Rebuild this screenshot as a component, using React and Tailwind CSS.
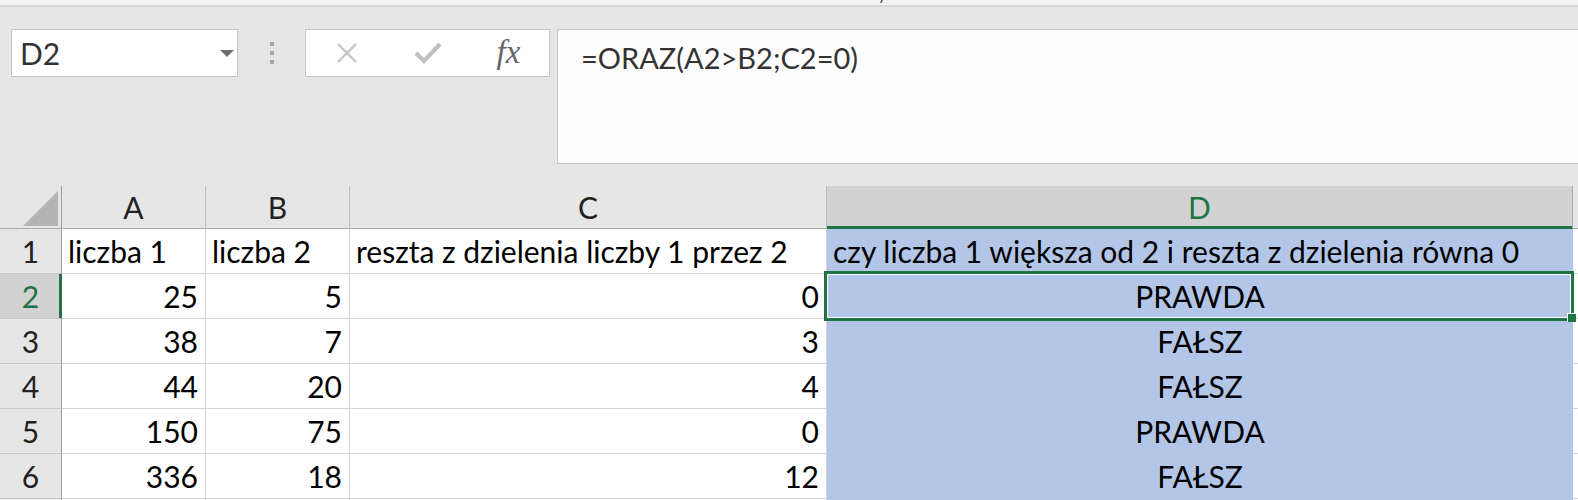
import React from "react";

const rows = [
  ["25", "5", "0", "PRAWDA"],
  ["38", "7", "3", "FAŁSZ"],
  ["44", "20", "4", "FAŁSZ"],
  ["150", "75", "0", "PRAWDA"],
  ["336", "18", "12", "FAŁSZ"],
];

function RowHead({ n, active }) {
  return (
    <div
      className={
        active
          ? "w-[62px] h-[45px] shrink-0 border-b border-r border-b-[#c8c8c8] border-r-[#217346] bg-[#d2d2d2] text-[#217346] text-center leading-[44px] shadow-[inset_-2px_0_0_#217346]"
          : "w-[62px] h-[45px] shrink-0 border-b border-r border-b-[#c8c8c8] border-r-[#9f9f9f] bg-[#e6e6e6] text-[#222] text-center leading-[44px]"
      }
    >
      {n}
    </div>
  );
}

export default function App() {
  return (
    <div className="w-[1578px] h-[500px] overflow-hidden bg-[#e6e6e6] font-['Lato',sans-serif] text-[30px]">
      {/* title strip */}
      <div className="h-[5px] bg-[#f3f3f3] overflow-hidden pl-[878px]">
        <span className="block -mt-[14px] text-[16px] leading-none text-[#444]">y</span>
      </div>
      <div className="h-[2px] bg-[#d5d5d5]" />

      {/* formula bar */}
      <div className="flex items-start h-[157px] pt-[22px]">
        <div className="ml-[11px] w-[227px] h-[48px] shrink-0 bg-white border border-[#c6c6c6] flex items-start justify-between">
          <span className="pl-[8px] pt-[5px] leading-[36px] text-[#333]">D2</span>
          <svg width="14" height="8" viewBox="0 0 14 8" className="mt-[20px] mr-[3px]">
            <polygon points="0,0 14,0 7,7" fill="#6d6d6d" />
          </svg>
        </div>
        <div className="w-[67px] shrink-0 flex flex-col items-center pt-[13px] gap-[5px]">
          <div className="w-[4px] h-[4px] bg-[#a8a8a8]" />
          <div className="w-[4px] h-[4px] bg-[#a8a8a8]" />
          <div className="w-[4px] h-[4px] bg-[#a8a8a8]" />
        </div>
        <div className="w-[245px] h-[48px] shrink-0 bg-white border border-[#c6c6c6] flex items-center">
          <div className="w-[81px] flex justify-center">
            <svg width="24" height="24" viewBox="0 0 24 24">
              <path d="M3 3 L21 21 M21 3 L3 21" stroke="#c4c4c4" strokeWidth="2.4" fill="none" />
            </svg>
          </div>
          <div className="w-[81px] flex justify-center">
            <svg width="28" height="24" viewBox="0 0 28 24">
              <path d="M2 12 L10 20 L26 3" stroke="#c0c0c0" strokeWidth="4.2" fill="none" />
            </svg>
          </div>
          <div className="w-[81px] flex justify-center">
            <span className="font-['Liberation_Serif',serif] italic text-[33px] leading-none text-[#666] pb-[2px]">fx</span>
          </div>
        </div>
        <div className="ml-[7px] flex-1 h-[135px] bg-[#fdfdfd] border-y border-l border-[#c6c6c6] pl-[23px] pt-[5px]">
          <span className="text-[29px] leading-[37px] text-[#333]">=ORAZ(A2&gt;B2;C2=0)</span>
        </div>
      </div>

      {/* sheet grid */}
      <div className="mt-[22px] relative">
        {/* column headers */}
        <div className="flex h-[43px]">
          <div className="w-[62px] h-[43px] shrink-0 border-r border-b border-r-[#9f9f9f] border-b-[#ababab] flex items-end justify-end pr-[3px] pb-[2px]">
            <svg width="35" height="35" viewBox="0 0 35 35">
              <polygon points="35,0 35,35 0,35" fill="#b4b4b4" />
            </svg>
          </div>
          <div className="w-[144px] h-[43px] shrink-0 border-r border-b border-r-[#bdbdbd] border-b-[#ababab] text-center leading-[42px] text-[#222]">A</div>
          <div className="w-[144px] h-[43px] shrink-0 border-r border-b border-r-[#bdbdbd] border-b-[#ababab] text-center leading-[42px] text-[#222]">B</div>
          <div className="w-[477px] h-[43px] shrink-0 border-r border-b border-r-[#bdbdbd] border-b-[#ababab] text-center leading-[42px] text-[#222]">C</div>
          <div className="w-[746px] h-[43px] shrink-0 border-r border-b border-r-[#a8a8a8] border-b-[#217346] bg-[#d2d2d2] text-center leading-[42px] text-[#217346] shadow-[inset_0_-2px_0_#217346]">D</div>
          <div className="flex-1 h-[43px] border-b border-b-[#ababab]" />
        </div>

        {/* row 1 */}
        <div className="flex h-[45px] text-black">
          <RowHead n="1" />
          <div className="w-[144px] h-[45px] shrink-0 bg-white border-b border-r border-[#d4d4d4] pl-[6px] leading-[44px] whitespace-nowrap overflow-hidden">liczba 1</div>
          <div className="w-[144px] h-[45px] shrink-0 bg-white border-b border-r border-[#d4d4d4] pl-[6px] leading-[44px] whitespace-nowrap overflow-hidden">liczba 2</div>
          <div className="w-[477px] h-[45px] shrink-0 bg-white border-b border-r border-[#d4d4d4] pl-[6px] leading-[44px] whitespace-nowrap overflow-hidden">reszta z dzielenia liczby 1 przez 2</div>
          <div className="w-[746px] h-[45px] shrink-0 bg-[#b4c6e7] pl-[6px] leading-[44px] whitespace-nowrap overflow-hidden">czy liczba 1 większa od 2 i reszta z dzielenia równa 0</div>
          <div className="flex-1 h-[45px] bg-white border-b border-[#d4d4d4]" />
        </div>

        {rows.map((r, i) => (
          <div key={i} className="flex h-[45px] text-black">
            <RowHead n={String(i + 2)} active={i === 0} />
            <div className="w-[144px] h-[45px] shrink-0 bg-white border-b border-r border-[#d4d4d4] pr-[7px] text-right leading-[44px]">{r[0]}</div>
            <div className="w-[144px] h-[45px] shrink-0 bg-white border-b border-r border-[#d4d4d4] pr-[7px] text-right leading-[44px]">{r[1]}</div>
            <div className="w-[477px] h-[45px] shrink-0 bg-white border-b border-r border-[#d4d4d4] pr-[7px] text-right leading-[44px]">{r[2]}</div>
            <div className="w-[746px] h-[45px] shrink-0 bg-[#b4c6e7] text-center leading-[44px]">{r[3]}</div>
            <div className="flex-1 h-[45px] bg-white border-b border-[#d4d4d4]" />
          </div>
        ))}

        {/* row 7 (only its top edge is visible) */}
        <div className="flex h-[45px]">
          <div className="w-[62px] h-[45px] shrink-0 border-r border-r-[#9f9f9f] bg-[#e6e6e6]" />
          <div className="w-[144px] h-[45px] shrink-0 bg-white border-r border-[#d4d4d4]" />
          <div className="w-[144px] h-[45px] shrink-0 bg-white border-r border-[#d4d4d4]" />
          <div className="w-[477px] h-[45px] shrink-0 bg-white border-r border-[#d4d4d4]" />
          <div className="w-[746px] h-[45px] shrink-0 bg-[#b4c6e7]" />
          <div className="flex-1 h-[45px] bg-white" />
        </div>

        {/* active cell selection D2 */}
        <div className="absolute left-[824px] top-[85px] w-[750px] h-[50px] border-[3px] border-[#217346]">
          <div className="w-full h-full border border-white" />
        </div>
        <div className="absolute left-[1567px] top-[127px] w-[9px] h-[9px] bg-[#217346] border-l border-t border-white" />
      </div>
    </div>
  );
}
